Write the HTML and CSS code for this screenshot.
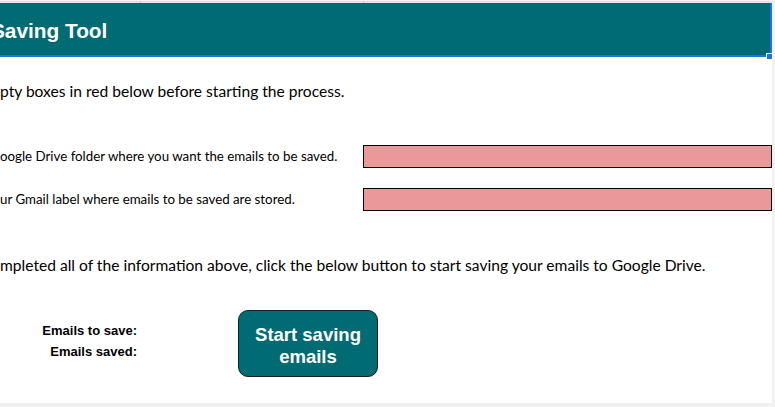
FILE: index.html
```html
<!DOCTYPE html>
<html>
<head>
<meta charset="utf-8">
<link rel="stylesheet" href="styles.css">
</head>
<body>
<div class="sheet">
  <div class="topstrip">
    <div class="colhead c1"></div>
    <div class="colhead c2"></div>
    <div class="colhead c3"></div>
  </div>
  <div class="header">
    <span class="title">Saving Tool</span>
    <span class="handle"></span>
  </div>
  <div class="line intro">pty boxes in red below before starting the process.</div>
  <div class="form">
    <div class="label">oogle Drive folder where you want the emails to be saved.</div>
    <div class="field"></div>
    <div class="label">ur Gmail label where emails to be saved are stored.</div>
    <div class="field"></div>
  </div>
  <div class="line note">mpleted all of the information above, click the below button to start saving your emails to Google Drive.</div>
  <div class="action">
    <div class="stats">
      <div class="stat">Emails to save:</div>
      <div class="stat">Emails saved:</div>
    </div>
    <div class="button">Start saving<br>emails</div>
  </div>
</div>
</body>
</html>
```

FILE: styles.css
```css
html, body {
  margin: 0;
  padding: 0;
}
body {
  width: 775px;
  height: 407px;
  overflow: hidden;
  background: #f1f1f1;
}
.sheet {
  width: 772px;
  height: 403px;
  background: #ffffff;
  display: flex;
  flex-direction: column;
}
.topstrip {
  height: 3px;
  display: flex;
  background: #e3e3e3;
  border-top: 1px solid #f4f4f4;
  box-sizing: border-box;
}
.colhead {
  height: 100%;
  box-sizing: border-box;
  border-right: 1px solid #c7c7c7;
}
.c1 { width: 141px; }
.c2 { width: 223px; }
.c3 { flex: 1; border-right: none; }
.header {
  position: relative;
  height: 54px;
  box-sizing: border-box;
  background: #016b74;
  border-bottom: 2px solid #1a73e8;
  border-right: 2px solid #1a73e8;
  display: flex;
  align-items: center;
  padding-top: 3px;
}
.title {
  font-family: "Liberation Sans", Arial, sans-serif;
  font-weight: bold;
  font-size: 20.8px;
  line-height: 23px;
  color: #ffffff;
  margin-left: -9px;
  white-space: nowrap;
}
.handle {
  position: absolute;
  left: 766px;
  top: 50px;
  width: 5px;
  height: 5px;
  background: #1a73e8;
  border: 1px solid #ffffff;
}
.line {
  font-family: Lato, "Open Sans", sans-serif;
  font-size: 15.6px;
  line-height: 20px;
  height: 20px;
  color: #000000;
  white-space: nowrap;
}
.intro {
  margin-top: 24px;
}
.form {
  margin-top: 44px;
  display: grid;
  grid-template-columns: 363px 409px;
  grid-auto-rows: 23px;
  row-gap: 20px;
}
.label {
  font-family: Lato, "Open Sans", sans-serif;
  font-size: 13.3px;
  line-height: 23px;
  color: #000000;
  white-space: nowrap;
}
.field {
  box-sizing: border-box;
  border: 1px solid #000000;
  background: #ea9999;
}
.note {
  margin-top: 44px;
}
.action {
  margin-top: 35px;
  display: flex;
  align-items: flex-start;
}
.stats {
  width: 137px;
  margin-top: 10px;
  text-align: right;
  font-family: "Liberation Sans", Arial, sans-serif;
  font-weight: bold;
  font-size: 13px;
  line-height: 21px;
  color: #000000;
}
.button {
  margin-left: 101px;
  width: 140px;
  height: 67px;
  box-sizing: border-box;
  border: 1px solid #1e1e1e;
  border-radius: 10px;
  background: #016b74;
  color: #ffffff;
  font-family: "Liberation Sans", Arial, sans-serif;
  font-weight: bold;
  font-size: 18.5px;
  line-height: 21.5px;
  text-align: center;
  padding-top: 13px;
}
```
